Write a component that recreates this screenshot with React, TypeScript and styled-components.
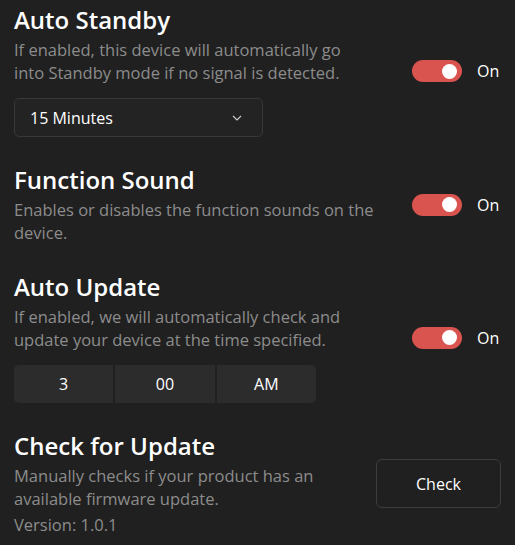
import React, { useState } from "react";
import styled, { createGlobalStyle } from "styled-components";

const GlobalStyle = createGlobalStyle`
  html, body {
    margin: 0;
    padding: 0;
    background: #ffffff;
  }
  body {
    font-family: "Segoe UI", "Open Sans", "Noto Sans", sans-serif;
  }
`;

const App = () => {
  const [standby, setStandby] = useState(true);
  const [sound, setSound] = useState(true);
  const [autoUpdate, setAutoUpdate] = useState(true);

  return (
    <>
      <GlobalStyle />
      <Page>
        <Section>
          <Info>
            <Title>Auto Standby</Title>
            <Desc>
              If enabled, this device will automatically go
              <br />
              into Standby mode if no signal is detected.
            </Desc>
            <Dropdown>
              <span>15 Minutes</span>
              <svg width="10" height="6" viewBox="0 0 10 6" fill="none">
                <path d="M1 1l4 4 4-4" stroke="#d0d0d0" strokeWidth="1.1" />
              </svg>
            </Dropdown>
          </Info>
          <Toggle on={standby} onClick={() => setStandby(!standby)} />
        </Section>

        <Section>
          <Info>
            <Title>Function Sound</Title>
            <Desc>
              Enables or disables the function sounds on the
              <br />
              device.
            </Desc>
          </Info>
          <Toggle on={sound} onClick={() => setSound(!sound)} />
        </Section>

        <Section>
          <Info>
            <Title>Auto Update</Title>
            <Desc>
              If enabled, we will automatically check and
              <br />
              update your device at the time specified.
            </Desc>
            <TimePicker>
              <TimeCell>3</TimeCell>
              <TimeCell>00</TimeCell>
              <TimeCell>AM</TimeCell>
            </TimePicker>
          </Info>
          <Toggle on={autoUpdate} onClick={() => setAutoUpdate(!autoUpdate)} />
        </Section>

        <Section>
          <Info>
            <Title>Check for Update</Title>
            <Desc>
              Manually checks if your product has an
              <br />
              available firmware update.
            </Desc>
            <Version>Version: 1.0.1</Version>
          </Info>
          <CheckButton>Check</CheckButton>
        </Section>
      </Page>
    </>
  );
};

const Toggle = ({ on, onClick }: { on: boolean; onClick: () => void }) => (
  <ToggleWrap onClick={onClick}>
    <Track $on={on}>
      <Knob />
    </Track>
    <ToggleLabel>{on ? "On" : "Off"}</ToggleLabel>
  </ToggleWrap>
);

export default App;

const Page = styled.div`
  width: 515px;
  min-height: 545px;
  box-sizing: border-box;
  background: #202020;
  padding: 5px 14px 0 14px;
  display: flex;
  flex-direction: column;
  gap: 28px;
`;

const Section = styled.div`
  display: flex;
  align-items: center;
  justify-content: space-between;
`;

const Info = styled.div`
  flex: 1;
  min-width: 0;
  display: flex;
  flex-direction: column;
  align-items: flex-start;
  margin-right: 18px;
`;

const Title = styled.div`
  color: #ffffff;
  font-size: 24px;
  font-weight: 600;
  line-height: 30px;
  margin-bottom: 3px;
  white-space: nowrap;
`;

const Desc = styled.div`
  color: #8c8c8c;
  font-size: 16.5px;
  line-height: 23px;
  white-space: nowrap;
`;

const Version = styled(Desc)`
  margin-top: 3px;
`;

const Dropdown = styled.div`
  margin-top: 14px;
  width: 249px;
  height: 39px;
  box-sizing: border-box;
  border: 1px solid #383838;
  border-radius: 5px;
  background: #232323;
  display: flex;
  align-items: center;
  justify-content: space-between;
  padding: 0 20px 0 15px;
  color: #ffffff;
  font-size: 16px;
`;

const TimePicker = styled.div`
  margin-top: 14px;
  width: 302px;
  height: 38px;
  display: grid;
  grid-template-columns: repeat(3, 1fr);
  gap: 2px;
  border-radius: 5px;
  overflow: hidden;
`;

const TimeCell = styled.div`
  background: #2c2c2c;
  color: #ffffff;
  font-size: 16px;
  display: flex;
  align-items: center;
  justify-content: center;
`;

const ToggleWrap = styled.div`
  display: flex;
  align-items: center;
  gap: 15px;
  cursor: pointer;
  width: 89px;
`;

const Track = styled.div<{ $on: boolean }>`
  width: 50px;
  height: 22px;
  border-radius: 11px;
  background: ${({ $on }) => ($on ? "#d9534f" : "#555555")};
  display: flex;
  align-items: center;
  justify-content: ${({ $on }) => ($on ? "flex-end" : "flex-start")};
  padding: 0 5px;
  box-sizing: border-box;
`;

const Knob = styled.div`
  width: 15px;
  height: 15px;
  border-radius: 50%;
  background: #ffffff;
`;

const ToggleLabel = styled.span`
  color: #ffffff;
  font-size: 16px;
`;

const CheckButton = styled.button`
  width: 125px;
  height: 49px;
  flex-shrink: 0;
  box-sizing: border-box;
  background: transparent;
  border: 1px solid #3d3d3d;
  border-radius: 6px;
  color: #ffffff;
  font-family: inherit;
  font-size: 16px;
  cursor: pointer;
`;
